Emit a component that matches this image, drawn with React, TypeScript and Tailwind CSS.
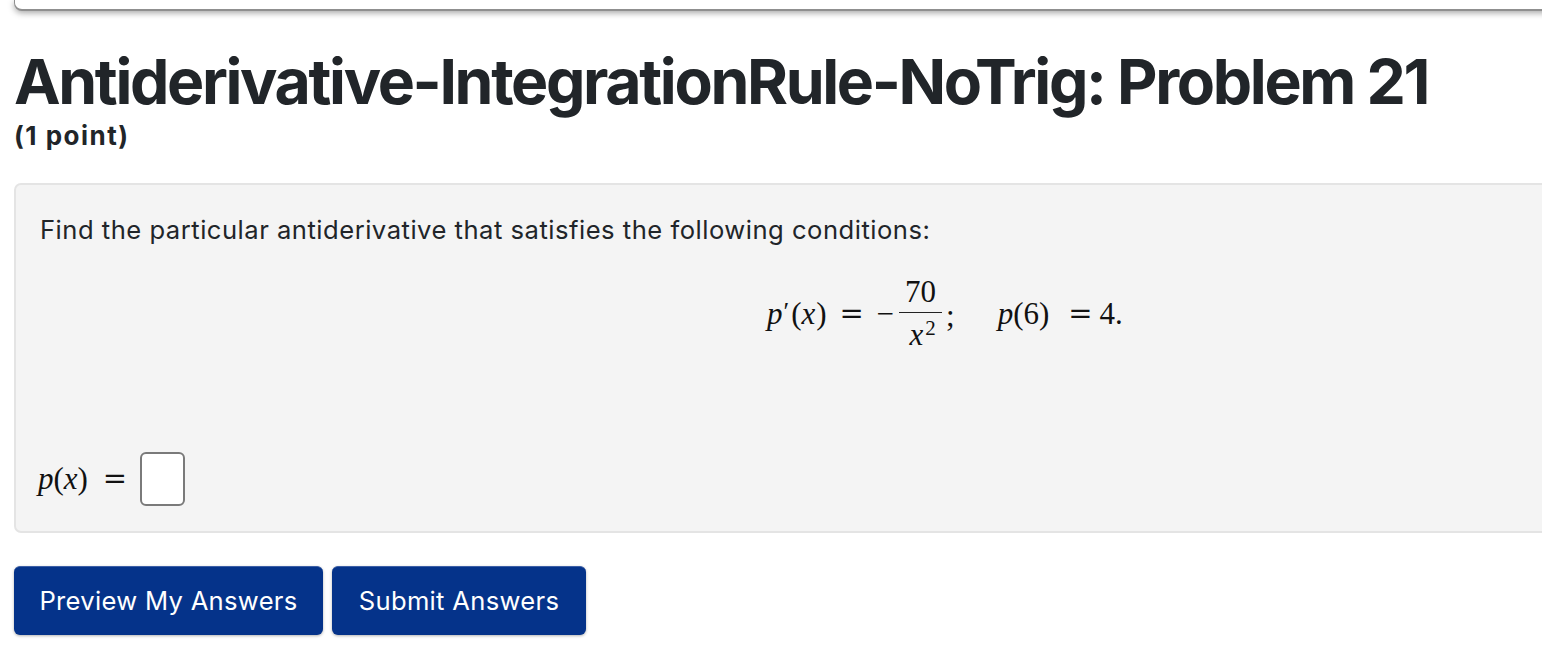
import React from 'react';

const sans = "font-['Inter','Noto_Sans',sans-serif]";
const math = "font-['Liberation_Serif','DejaVu_Serif',serif]";
const op = "inline-flex justify-center w-[22px] font-['DejaVu_Serif',serif] text-[29px]";

const Frac = () => (
  <span className="inline-flex flex-col items-center ml-[5px] mr-[4px] relative top-[-1px]">
    <span className="px-[6px] leading-none pb-[5px]">70</span>
    <span className="w-full border-t-[1.5px] border-[#222]" />
    <span className="leading-none pt-[6px] pl-[4px]">
      <i>x</i>
      <span className="text-[21px] relative top-[-10px] ml-[2px]">2</span>
    </span>
  </span>
);

const btn =
  'h-[69px] bg-[#05338a] text-white text-[25.6px] tracking-[0.3px] rounded-[6px] border-t border-[#3c5fa6] shadow-[0_1px_3px_rgba(0,0,0,0.3)]';

export default function App() {
  return (
    <div className={`w-full min-h-[646px] overflow-hidden bg-white text-[#212529] ${sans}`}>
      {/* bottom edge of the card above */}
      <div className="ml-[14px] -mr-10 h-[11px] bg-white border-b-[2px] border-l border-[#8f8f8f] rounded-bl-[8px] shadow-[0_2px_6px_rgba(0,0,0,0.35)]" />

      <div className="pl-[14px]">
        <h1 className="mt-[30px] text-[62.5px] font-bold leading-[80px] tracking-[-2.35px] whitespace-nowrap">
          Antiderivative-IntegrationRule-NoTrig: Problem 21
        </h1>
        <p className="text-[26px] font-bold leading-[30px] tracking-[1.5px]">(1 point)</p>

        <div className="mt-[32px] -mr-40 h-[350px] bg-[#f4f4f4] border-2 border-[#e4e4e4] rounded-[7px] pl-[24px] pt-[26px]">
          <p className="text-[25.6px] leading-[38px] tracking-[0.5px]">
            Find the particular antiderivative that satisfies the following conditions:
          </p>

          <div className={`mt-[28px] ml-[727px] flex items-center text-[31px] text-[#111] ${math}`}>
            <span>
              <i>p</i>
              <span className="relative top-[-4px] text-[26px] ml-[1px]">′</span>
              <span className="ml-[2px]">(</span>
              <i>x</i>
              <span className="ml-[1px]">)</span>
            </span>
            <span className={`${op} ml-[14px] mr-[14px]`}>=</span>
            <span>−</span>
            <Frac />
            <span className="relative top-[2px]">;</span>
            <span className="ml-[43px]">
              <i>p</i>(6)
            </span>
            <span className={`${op} ml-[20px] mr-[8px]`}>=</span>
            <span>4.</span>
          </div>

          <div className={`mt-[101px] flex items-center text-[31px] text-[#111] ${math}`}>
            <span className="ml-[-2px]">
              <i>p</i>(<i>x</i>)
            </span>
            <span className={`${op} ml-[16px] mr-[14px]`}>=</span>
            <span className="inline-block w-[45px] h-[54px] bg-white border-2 border-[#7a7a7a] rounded-[6px]" />
          </div>
        </div>

        <div className="mt-[33px] flex gap-[9px]">
          <button className={`w-[309px] ${btn}`}>Preview My Answers</button>
          <button className={`w-[254px] ${btn}`}>Submit Answers</button>
        </div>
      </div>
    </div>
  );
}
